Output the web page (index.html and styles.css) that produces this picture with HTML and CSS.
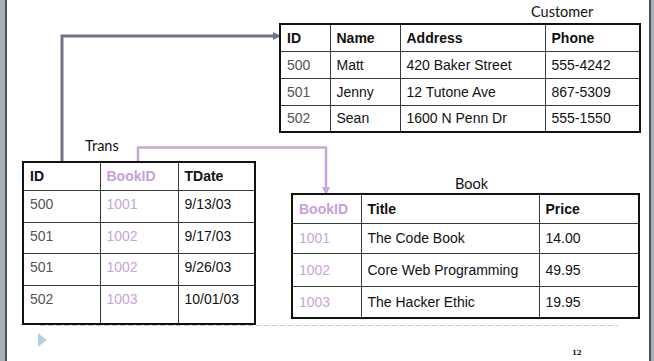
FILE: index.html
```html
<!DOCTYPE html>
<html>
<head>
<meta charset="utf-8">
<link rel="stylesheet" href="styles.css">
</head>
<body>
<div class="slide">
  <div class="bar-left"></div>
  <div class="canvas"></div>
  <div class="bar-right"></div>

  <svg class="wires" width="654" height="361" viewBox="0 0 654 361">
    <line x1="40" y1="325.5" x2="618" y2="325.5" class="dash"/>
    <polygon points="38,333 47,340 38,347" class="tri"/>
    <path d="M62,163 V36 H274" class="gray"/>
    <polygon points="273,32 281,36 273,40" fill="#74738a"/>
    <path d="M138,163 V147.5 H326 V188" class="purple"/>
    <polygon points="322,187 326,195 330,187" fill="#c9a5da"/>
  </svg>

  <div class="label label-customer">Customer</div>
  <div class="label label-trans">Trans</div>
  <div class="label label-book">Book</div>

  <table class="tbl customer">
    <colgroup><col class="c50"><col class="c70"><col class="c145"><col class="c93"></colgroup>
    <tr class="hd"><th>ID</th><th>Name</th><th>Address</th><th>Phone</th></tr>
    <tr><td class="id">500</td><td>Matt</td><td>420 Baker Street</td><td>555-4242</td></tr>
    <tr><td class="id">501</td><td>Jenny</td><td>12 Tutone Ave</td><td>867-5309</td></tr>
    <tr><td class="id">502</td><td>Sean</td><td>1600 N Penn Dr</td><td>555-1550</td></tr>
  </table>

  <table class="tbl trans">
    <colgroup><col class="c77"><col class="c78"><col class="c77"></colgroup>
    <tr class="hd"><th>ID</th><th class="fk">BookID</th><th>TDate</th></tr>
    <tr class="r32"><td class="id">500</td><td class="fkv">1001</td><td>9/13/03</td></tr>
    <tr class="r31"><td class="id">501</td><td class="fkv">1002</td><td>9/17/03</td></tr>
    <tr class="r32"><td class="id">501</td><td class="fkv">1002</td><td>9/26/03</td></tr>
    <tr class="r39"><td class="id">502</td><td class="fkv">1003</td><td>10/01/03</td></tr>
  </table>

  <table class="tbl book">
    <colgroup><col class="c69"><col class="c178"><col class="c98"></colgroup>
    <tr class="hd"><th class="fk">BookID</th><th>Title</th><th>Price</th></tr>
    <tr class="b30"><td class="fkv">1001</td><td>The Code Book</td><td>14.00</td></tr>
    <tr class="b33"><td class="fkv">1002</td><td>Core Web Programming</td><td>49.95</td></tr>
    <tr class="b32"><td class="fkv">1003</td><td>The Hacker Ethic</td><td>19.95</td></tr>
  </table>

  <div class="pagenum">12</div>
</div>
</body>
</html>
```
FILE: styles.css
```css
* { box-sizing: border-box; }
html, body { margin: 0; padding: 0; background: #fff; }
body { width: 654px; height: 361px; overflow: hidden; }

.slide {
  position: relative;
  display: flex;
  width: 654px;
  height: 361px;
}
.bar-left {
  width: 7px;
  background: #a8afbb;
  border-right: 2px solid #4d525b;
}
.canvas { flex: 1; background: #fff; }
.bar-right {
  width: 5px;
  background: #a8afbb;
  border-left: 2px solid #4d525b;
}

.wires { position: absolute; left: 0; top: 0; }
.wires .gray { fill: none; stroke: #74738a; stroke-width: 3; }
.wires .purple { fill: none; stroke: #c9a5da; stroke-width: 2.5; }
.wires .dash { stroke: #a9d0e8; stroke-width: 1; stroke-dasharray: 5 3; }
.wires .tri { fill: #b1d1e2; }

.label {
  position: absolute;
  font-family: "Lato", "Open Sans", sans-serif;
  font-size: 14.5px;
  color: #111;
  line-height: 1;
}
.label-customer { left: 531px; top: 5px; }
.label-trans { left: 85px; top: 139px; }
.label-book { left: 455px; top: 177px; }

.tbl {
  position: absolute;
  border-collapse: collapse;
  table-layout: fixed;
  font-family: "Liberation Sans", Arial, sans-serif;
  font-size: 14px;
  color: #111;
  border: 2px solid #111;
}
.tbl th, .tbl td {
  border: 1px solid #3a3a3a;
  padding: 0 0 0 6px;
  text-align: left;
  white-space: nowrap;
  overflow: hidden;
}
.tbl th { font-weight: bold; }
.tbl td.id { color: #555; }
.tbl .fk { color: #c79fd9; }
.tbl .fkv { color: #c9a5da; }

.customer { left: 279px; top: 23px; width: 360px; }
.customer tr { height: 27px; }
.c50 { width: 50px; } .c70 { width: 70px; } .c145 { width: 145px; } .c93 { width: 95px; }

.trans { left: 22px; top: 161px; width: 234px; }
.c77 { width: 77px; } .c78 { width: 78px; }
.trans tr.hd { height: 28px; }
.trans td { vertical-align: top; padding-top: 5px; }
.trans .r32 { height: 32px; }
.trans .r31 { height: 31px; }
.trans .r39 { height: 39px; }

.book { left: 291px; top: 193px; width: 347px; }
.c69 { width: 69px; } .c178 { width: 178px; } .c98 { width: 100px; }
.book tr.hd { height: 29px; }
.book .b30 { height: 30px; }
.book .b33 { height: 33px; }
.book .b32 { height: 32px; }

.pagenum {
  position: absolute;
  left: 572px;
  top: 349px;
  font-family: "DejaVu Serif", serif;
  font-size: 7px;
  font-weight: bold;
  color: #222;
  line-height: 1;
}
```
